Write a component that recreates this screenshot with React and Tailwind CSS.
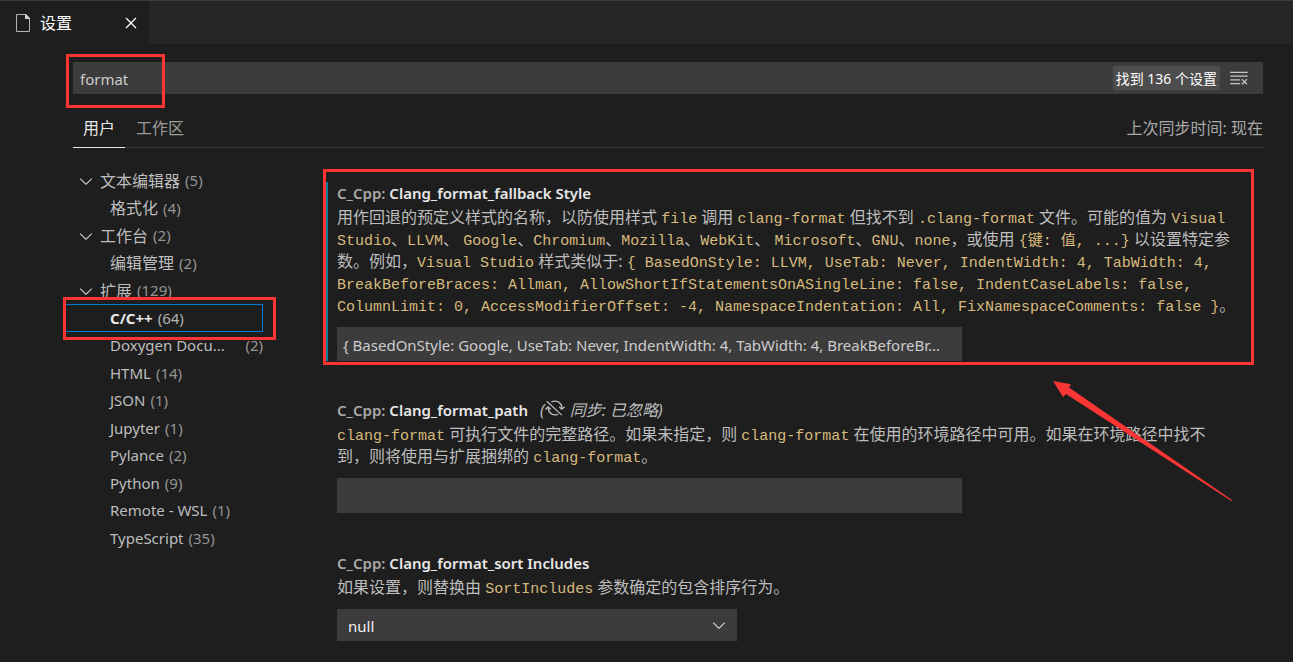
import React from "react";
import { VscChevronDown, VscClearAll, VscClose, VscSyncIgnored } from "react-icons/vsc";

const MARK = "pointer-events-none absolute border-3 border-[#fb3434]";

const groups = [
  { name: "文本编辑器", count: 5, head: true, cjk: true },
  { name: "格式化", count: 4, cjk: true },
  { name: "工作台", count: 2, head: true, cjk: true },
  { name: "编辑管理", count: 2, cjk: true },
  { name: "扩展", count: 129, head: true, cjk: true },
  { name: "C/C++", count: 64, active: true },
  { name: "Doxygen Docu...", count: 2, spread: true },
  { name: "HTML", count: 14 },
  { name: "JSON", count: 1 },
  { name: "Jupyter", count: 1 },
  { name: "Pylance", count: 2 },
  { name: "Python", count: 9 },
  { name: "Remote - WSL", count: 1 },
  { name: "TypeScript", count: 35 },
];

function Code({ children }) {
  return (
    <code className="font-['Liberation_Mono','Noto_Sans_CJK_SC',monospace] text-[15px] leading-none text-[#d7ba7d]">
      {children}
    </code>
  );
}

function Title({ id, name, children }) {
  return (
    <div className="flex h-[22px] items-center whitespace-pre text-[15px] leading-[22px]">
      <label htmlFor={id} className="font-semibold text-[#e7e7e7]">
        <span className="text-[#a8a8a8]">C_Cpp: </span>
        {name}
      </label>
      {children}
    </div>
  );
}

function Description({ children }) {
  return <p className="mt-[2px] whitespace-nowrap text-base leading-[22px] text-[#bdbdbd]">{children}</p>;
}

function TreeItem({ item }) {
  return (
    <li className="relative odd:h-[27px] even:h-[28px]">
      <button
        className={
          "flex h-full w-full items-center whitespace-nowrap text-left " +
          (item.head ? "pl-[10px]" : "pl-[44px]") +
          (item.active ? " border-y border-r border-[#007fd4]" : "")
        }
      >
        {item.head && <VscChevronDown className="mr-1 size-5 shrink-0 text-[#cccccc]" />}
        <span
          className={
            item.active ? "text-[15px] font-bold text-[#e7e7e7]" : item.cjk ? "text-base" : "text-[15px]"
          }
        >
          {item.name}
        </span>
        <span
          className={
            (item.spread ? "ml-auto " : "ml-[5px] ") +
            (item.active ? "text-[15px] text-[#b0b0b0]" : "text-[15px] text-[#959595]")
          }
        >
          ({item.count})
        </span>
      </button>
      {item.active && <span className={MARK + " -top-[7px] -bottom-2 -left-[3px] -right-[13px] z-10"} />}
    </li>
  );
}

export default function App() {
  return (
    <div className="relative min-h-screen overflow-hidden bg-[#1e1e1e] font-['Noto_Sans','Noto_Sans_CJK_SC',sans-serif] text-[15px] text-[#bdbdbd]">
      <header className="flex h-11 border-t border-[#3a3a3a] bg-[#252526]">
        <div className="flex w-[149px] items-center bg-[#1e1e1e] pl-4 pr-2 text-white">
          <svg viewBox="0 0 14 18" className="h-[18px] w-[14px]" fill="none">
            <path d="M9 .5H.5V17.5H13.5V5" stroke="#b4b4b4" strokeWidth="1" />
            <path d="M9 0h1l4 4v1H9z" fill="#d0d0d0" />
          </svg>
          <span className="ml-[10px] text-base">设置</span>
          <button aria-label="关闭" className="ml-auto">
            <VscClose className="size-5" />
          </button>
        </div>
      </header>

      <main className="pl-[73px] pr-[30px] pt-[18px]">
        <div className="relative flex h-8 items-center bg-[#3c3c3c]">
          <input
            aria-label="搜索设置"
            defaultValue="format"
            className="h-full min-w-0 flex-1 bg-transparent px-[7px] pt-px text-[#cccccc] outline-none"
          />
          <span className="flex h-6 items-center rounded-[2px] bg-[#4d4d4d] px-[3px] text-[14px] text-white">
            找到 136 个设置
          </span>
          <button aria-label="清除搜索" className="ml-[9px] mr-[14px]">
            <VscClearAll className="size-5 text-[#c5c5c5]" />
          </button>
          <span className={MARK + " -left-[7px] -top-2 h-[54px] w-[99px]"} />
        </div>

        <nav className="mt-4 flex h-[38px] items-stretch border-b border-[#3c3c3c] text-base">
          <button className="-mb-px border-b border-[#e7e7e7] px-[10px] pb-px text-[#e7e7e7]">用户</button>
          <button className="px-[11px] pb-px text-[#9c9c9c]">工作区</button>
          <span className="ml-auto self-center pb-px text-[#a8a8a8]">上次同步时间: 现在</span>
        </nav>

        <div className="flex items-start">
          <ul className="-ml-[7px] mt-[19px] w-[197px] shrink-0">
            {groups.map((g) => (
              <TreeItem key={g.name} item={g} />
            ))}
          </ul>

          <div className="min-w-0 flex-1 pl-[60px] pt-[21px]">
            <section className="relative mr-[9px] pb-1 pl-[3px] pt-[13px]">
              <div className="border-l-2 border-[#0c7d9d] pl-[9px]">
                <Title id="fallback" name="Clang_format_fallback Style" />
                <Description>
                  用作回退的预定义样式的名称，以防使用样式 <Code>file</Code> 调用 <Code>clang-format</Code> 但找不到{" "}
                  <Code>.clang-format</Code> 文件。可能的值为 <Code>Visual</Code>
                  <br />
                  <Code>Studio</Code>、<Code>LLVM</Code>、 <Code>Google</Code>、<Code>Chromium</Code>、
                  <Code>Mozilla</Code>、<Code>WebKit</Code>、 <Code>Microsoft</Code>、<Code>GNU</Code>、
                  <Code>none</Code>，或使用 <Code>{"{键: 值, ...}"}</Code> 以设置特定参
                  <br />
                  数。例如，<Code>Visual Studio</Code> 样式类似于:{" "}
                  <Code>{"{ BasedOnStyle: LLVM, UseTab: Never, IndentWidth: 4, TabWidth: 4,"}</Code>
                  <br />
                  <Code>BreakBeforeBraces: Allman, AllowShortIfStatementsOnASingleLine: false, IndentCaseLabels: false,</Code>
                  <br />
                  <Code>{"ColumnLimit: 0, AccessModifierOffset: -4, NamespaceIndentation: All, FixNamespaceComments: false }"}</Code>。
                </Description>
                <input
                  id="fallback"
                  defaultValue="{ BasedOnStyle: Google, UseTab: Never, IndentWidth: 4, TabWidth: 4, BreakBeforeBr..."
                  className="mt-[11px] block h-[34px] w-full max-w-[625px] bg-[#3c3c3c] px-[6px] pt-px text-[#cccccc] outline-none"
                />
              </div>
              <span className={MARK + " inset-0"} />
            </section>

            <section className="mt-[34px] pl-[14px]">
              <Title id="path" name="Clang_format_path">
                <span className="ml-3 flex items-center text-base italic">
                  (<VscSyncIgnored className="mb-1 mr-[5px] size-5" />
                  同步: 已忽略)
                </span>
              </Title>
              <Description>
                <Code>clang-format</Code> 可执行文件的完整路径。如果未指定，则 <Code>clang-format</Code> 在使用的环境路径中可用。如果在环境路径中找不
                <br />
                到，则将使用与扩展捆绑的 <Code>clang-format</Code>。
              </Description>
              <input id="path" aria-label="Clang_format_path" className="mt-[11px] block h-[35px] w-full max-w-[625px] bg-[#3c3c3c] px-[6px] outline-none" />
            </section>

            <section className="mt-[39px] pl-[14px]">
              <Title id="sort" name="Clang_format_sort Includes" />
              <Description>
                如果设置，则替换由 <Code>SortIncludes</Code> 参数确定的包含排序行为。
              </Description>
              <div className="relative mt-[11px] max-w-[400px]">
                <select id="sort" className="block h-8 w-full appearance-none bg-[#3c3c3c] px-[11px] pt-[2px] text-[#f0f0f0] outline-none">
                  <option>null</option>
                </select>
                <VscChevronDown className="pointer-events-none absolute right-2 top-[6px] size-5 text-[#d4d4d4]" />
              </div>
            </section>
          </div>
        </div>
      </main>

      <svg
        viewBox="0 0 180 121"
        className="pointer-events-none absolute right-[60px] top-[381px] h-[121px] w-[180px]"
        aria-hidden="true"
      >
        <path d="M0 0L18 3.2L16 6.5L179 119L178.4 120L13 13L10 16Z" fill="#fb3434" />
      </svg>
    </div>
  );
}
